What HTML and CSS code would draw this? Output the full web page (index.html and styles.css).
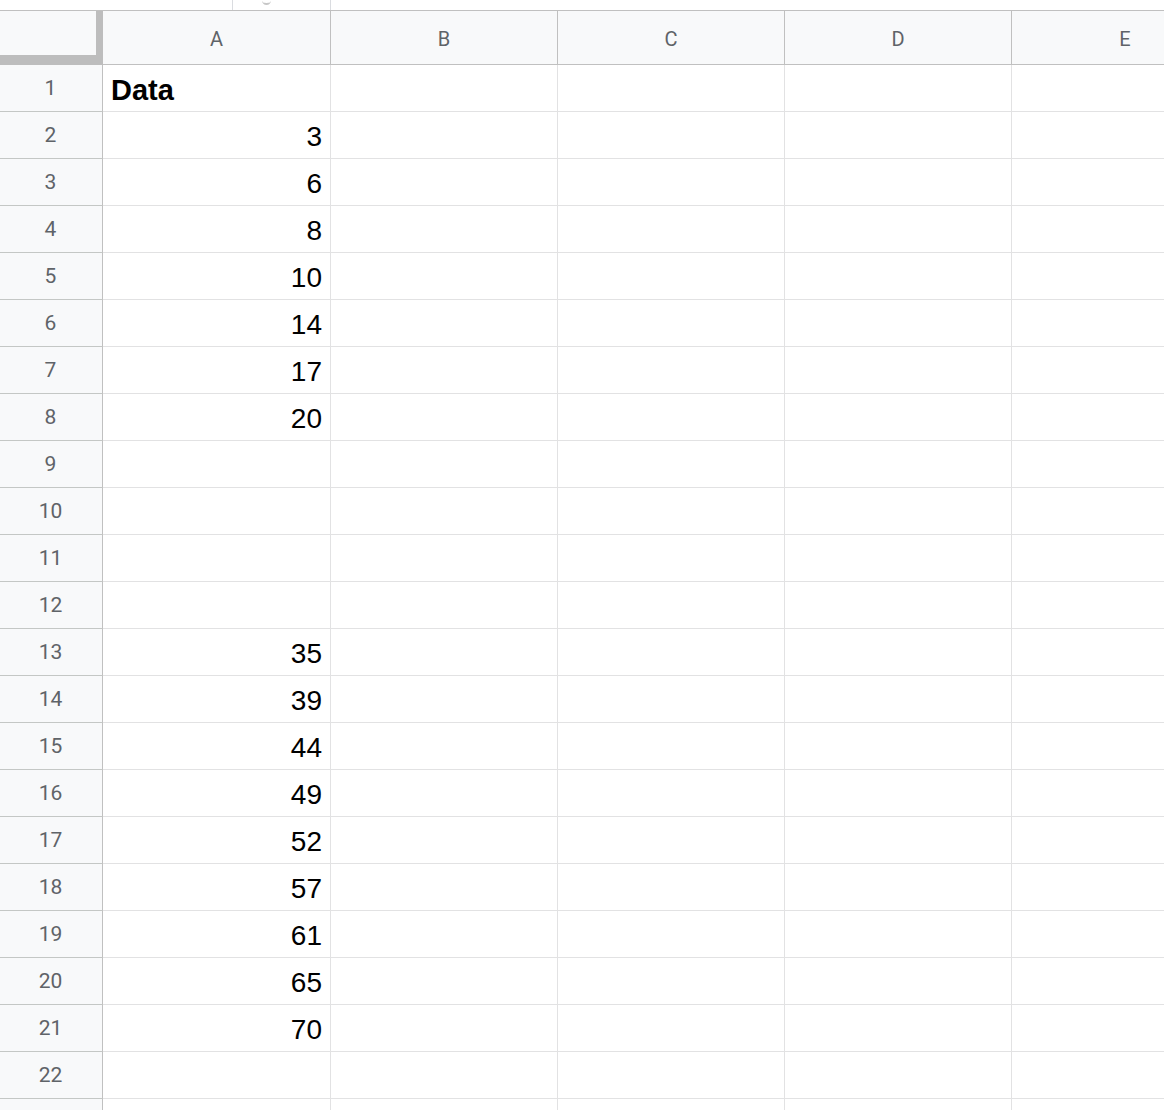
FILE: index.html
```html
<!DOCTYPE html>
<html>
<head>
<meta charset="utf-8">
<link rel="stylesheet" href="styles.css">
</head>
<body>
<div class="sheet">
  <div class="topstrip"><div class="tab"><span class="glyph"></span></div></div>
  <div class="grid">
    <div class="corner"></div>
    <div class="ch">A</div><div class="ch">B</div><div class="ch">C</div><div class="ch">D</div><div class="ch">E</div>

    <div class="rh">1</div><div class="c bold">Data</div><div class="c"></div><div class="c"></div><div class="c"></div><div class="c"></div>
    <div class="rh">2</div><div class="c num">3</div><div class="c"></div><div class="c"></div><div class="c"></div><div class="c"></div>
    <div class="rh">3</div><div class="c num">6</div><div class="c"></div><div class="c"></div><div class="c"></div><div class="c"></div>
    <div class="rh">4</div><div class="c num">8</div><div class="c"></div><div class="c"></div><div class="c"></div><div class="c"></div>
    <div class="rh">5</div><div class="c num">10</div><div class="c"></div><div class="c"></div><div class="c"></div><div class="c"></div>
    <div class="rh">6</div><div class="c num">14</div><div class="c"></div><div class="c"></div><div class="c"></div><div class="c"></div>
    <div class="rh">7</div><div class="c num">17</div><div class="c"></div><div class="c"></div><div class="c"></div><div class="c"></div>
    <div class="rh">8</div><div class="c num">20</div><div class="c"></div><div class="c"></div><div class="c"></div><div class="c"></div>
    <div class="rh">9</div><div class="c"></div><div class="c"></div><div class="c"></div><div class="c"></div><div class="c"></div>
    <div class="rh">10</div><div class="c"></div><div class="c"></div><div class="c"></div><div class="c"></div><div class="c"></div>
    <div class="rh">11</div><div class="c"></div><div class="c"></div><div class="c"></div><div class="c"></div><div class="c"></div>
    <div class="rh">12</div><div class="c"></div><div class="c"></div><div class="c"></div><div class="c"></div><div class="c"></div>
    <div class="rh">13</div><div class="c num">35</div><div class="c"></div><div class="c"></div><div class="c"></div><div class="c"></div>
    <div class="rh">14</div><div class="c num">39</div><div class="c"></div><div class="c"></div><div class="c"></div><div class="c"></div>
    <div class="rh">15</div><div class="c num">44</div><div class="c"></div><div class="c"></div><div class="c"></div><div class="c"></div>
    <div class="rh">16</div><div class="c num">49</div><div class="c"></div><div class="c"></div><div class="c"></div><div class="c"></div>
    <div class="rh">17</div><div class="c num">52</div><div class="c"></div><div class="c"></div><div class="c"></div><div class="c"></div>
    <div class="rh">18</div><div class="c num">57</div><div class="c"></div><div class="c"></div><div class="c"></div><div class="c"></div>
    <div class="rh">19</div><div class="c num">61</div><div class="c"></div><div class="c"></div><div class="c"></div><div class="c"></div>
    <div class="rh">20</div><div class="c num">65</div><div class="c"></div><div class="c"></div><div class="c"></div><div class="c"></div>
    <div class="rh">21</div><div class="c num">70</div><div class="c"></div><div class="c"></div><div class="c"></div><div class="c"></div>
    <div class="rh">22</div><div class="c"></div><div class="c"></div><div class="c"></div><div class="c"></div><div class="c"></div>
    <div class="rh"></div><div class="c"></div><div class="c"></div><div class="c"></div><div class="c"></div><div class="c"></div>
  </div>
</div>
</body>
</html>
```
FILE: styles.css
```css
html, body {
  margin: 0;
  padding: 0;
  background: #ffffff;
  overflow: hidden;
}
.sheet {
  width: 1164px;
  height: 1110px;
  overflow: hidden;
}
.topstrip {
  height: 10px;
  border-bottom: 1px solid #c0c0c0;
  background: #ffffff;
}
.tab {
  margin-left: 232px;
  width: 97px;
  height: 10px;
  border-left: 1px solid #dadce0;
  border-right: 1px solid #dadce0;
  display: flex;
  justify-content: center;
}
.glyph {
  display: block;
  width: 9px;
  height: 3px;
  margin-left: -30px;
  border-bottom: 2px solid #c7c7c7;
  border-radius: 0 0 5px 5px;
}
.grid {
  display: grid;
  grid-template-columns: 103px 228px 227px 227px 227px 227px;
  grid-auto-rows: 47px;
  grid-template-rows: 54px;
  width: 1239px;
}
.corner {
  box-sizing: border-box;
  height: 54px;
  background: #f8f9fa;
  border-right: 7px solid #bdbdbd;
  border-bottom: 10px solid #bdbdbd;
}
.ch {
  box-sizing: border-box;
  height: 54px;
  background: #f8f9fa;
  border-right: 1px solid #c0c0c0;
  border-bottom: 1px solid #c0c0c0;
  display: flex;
  align-items: center;
  justify-content: center;
  font-family: Roboto, "Liberation Sans", sans-serif;
  font-size: 20px;
  color: #5f6368;
  padding-top: 2px;
}
.rh {
  box-sizing: border-box;
  height: 47px;
  background: #f8f9fa;
  border-right: 1px solid #c0c0c0;
  border-bottom: 1px solid #c4c7c5;
  display: flex;
  align-items: center;
  justify-content: center;
  font-family: Roboto, "Liberation Sans", sans-serif;
  font-size: 21px;
  color: #5f6368;
  padding-right: 1px;
  padding-bottom: 1px;
}
.c {
  box-sizing: border-box;
  height: 47px;
  border-right: 1px solid #e2e2e3;
  border-bottom: 1px solid #e2e2e3;
  font-family: "Liberation Sans", Arial, sans-serif;
  font-size: 28px;
  color: #000000;
  display: flex;
  align-items: flex-end;
  padding-bottom: 5px;
  line-height: 32px;
}
.num {
  justify-content: flex-end;
  padding-right: 8px;
}
.bold {
  font-weight: bold;
  font-size: 29px;
  padding-left: 8px;
}
```
